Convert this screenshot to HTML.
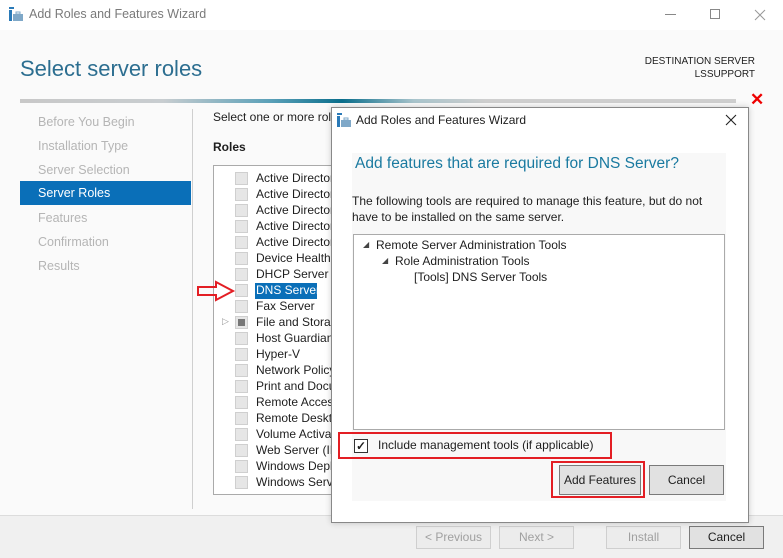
<!DOCTYPE html>
<html><head><style>
*{margin:0;padding:0;box-sizing:border-box}
body{width:783px;height:558px;overflow:hidden;position:relative;background:#fafafa;font-family:"Segoe UI","Liberation Sans",sans-serif;font-size:12px;color:#1e1e1e}
.a{position:absolute;white-space:nowrap}
.btn{position:absolute;height:23px;border:1px solid #adadad;background:#e1e1e1;text-align:center;line-height:20px;font-size:12px}
.dis{color:#a0a0a0;border-color:#cfcfcf;background:#ececec}
.cb{position:absolute;left:235px;width:13px;height:13px;background:#e6e6e6;border:1px solid #cfcfcf}
.ri{position:absolute;left:256px;font-size:12px}
.nav{position:absolute;left:38px;color:#b5b5b5;font-size:12.5px}
</style></head><body>
<div class="a" style="left:0;top:0;width:783px;height:30px;background:#fff"></div>
<svg class="a" style="left:8px;top:6px" width="16" height="16"><rect x="1" y="1" width="5" height="2" fill="#2a7ab8"/><rect x="1" y="4" width="3" height="11" fill="#2a7ab8"/><rect x="5" y="8" width="10" height="7" fill="#7fa8c8"/><rect x="8" y="6" width="4" height="2" fill="none" stroke="#7fa8c8"/></svg>
<div class="a" style="left:29px;top:7px;color:#7a7a7a;font-size:12.5px">Add Roles and Features Wizard</div>
<div class="a" style="left:665px;top:14px;width:11px;height:1px;background:#888"></div>
<div class="a" style="left:710px;top:9px;width:10px;height:10px;border:1px solid #888"></div>
<svg class="a" style="left:754px;top:9px" width="12" height="12"><path d="M1 1L11 11M11 1L1 11" stroke="#999" stroke-width="1"/></svg>
<div class="a" style="left:20px;top:56px;font-size:22px;color:#2c6e90;font-weight:300">Select server roles</div>
<div class="a" style="left:600px;top:55px;width:155px;text-align:right;font-size:10px;line-height:13px">DESTINATION SERVER<br>LSSUPPORT</div>
<div class="a" style="left:20px;top:99px;width:716px;height:4px;background:linear-gradient(90deg,#c8c8c8 0%,#c8cdd0 20%,#5aa0b8 35%,#0a6e8c 45%,#a8c4cc 55%,#cfcfcf 65%,#cfcfcf 100%)"></div>
<div class="a" style="left:750px;top:90px;color:#e00;font-size:17px;font-weight:bold">✕</div>
<div class="a" style="left:192px;top:109px;width:1px;height:400px;background:#cfcfcf"></div>
<div class="nav" style="top:115px">Before You Begin</div>
<div class="nav" style="top:139px">Installation Type</div>
<div class="nav" style="top:163px">Server Selection</div>
<div class="a" style="left:20px;top:181px;width:171px;height:24px;background:#0a6fb8"></div>
<div class="nav" style="top:186px;color:#fff">Server Roles</div>
<div class="nav" style="top:211px">Features</div>
<div class="nav" style="top:235px">Confirmation</div>
<div class="nav" style="top:259px">Results</div>
<div class="a" style="left:213px;top:110px">Select one or more rol</div>
<div class="a" style="left:213px;top:140px;font-weight:bold;font-size:12px">Roles</div>
<div class="a" style="left:213px;top:165px;width:130px;height:330px;background:#fff;border:1px solid #aaa"></div>
<div class="cb" style="top:172px"></div><div class="ri" style="top:171px">Active Director</div>
<div class="cb" style="top:188px"></div><div class="ri" style="top:187px">Active Director</div>
<div class="cb" style="top:204px"></div><div class="ri" style="top:203px">Active Director</div>
<div class="cb" style="top:220px"></div><div class="ri" style="top:219px">Active Director</div>
<div class="cb" style="top:236px"></div><div class="ri" style="top:235px">Active Director</div>
<div class="cb" style="top:252px"></div><div class="ri" style="top:251px">Device Health</div>
<div class="cb" style="top:268px"></div><div class="ri" style="top:267px">DHCP Server</div>
<div class="cb" style="top:284px"></div><div class="a" style="left:255px;top:283px;width:62px;height:16px;background:#0a6fb8"></div><div class="ri" style="top:283px;color:#fff">DNS Server</div>
<svg class="a" style="left:196px;top:280px" width="40" height="22"><path d="M2 7 H20 V2 L37 11 L20 20 V15 H2 Z" fill="none" stroke="#e31e24" stroke-width="2"/></svg>
<div class="cb" style="top:300px"></div><div class="ri" style="top:299px">Fax Server</div>
<div class="a" style="left:222px;top:316px;color:#999;font-size:9px">▷</div>
<div class="cb" style="top:316px"></div><div class="a" style="left:238px;top:319px;width:7px;height:7px;background:#777"></div><div class="ri" style="top:315px">File and Storag</div>
<div class="cb" style="top:332px"></div><div class="ri" style="top:331px">Host Guardian</div>
<div class="cb" style="top:348px"></div><div class="ri" style="top:347px">Hyper-V</div>
<div class="cb" style="top:364px"></div><div class="ri" style="top:363px">Network Policy</div>
<div class="cb" style="top:380px"></div><div class="ri" style="top:379px">Print and Docu</div>
<div class="cb" style="top:396px"></div><div class="ri" style="top:395px">Remote Access</div>
<div class="cb" style="top:412px"></div><div class="ri" style="top:411px">Remote Deskto</div>
<div class="cb" style="top:428px"></div><div class="ri" style="top:427px">Volume Activa</div>
<div class="cb" style="top:444px"></div><div class="ri" style="top:443px">Web Server (IIS</div>
<div class="cb" style="top:460px"></div><div class="ri" style="top:459px">Windows Depl</div>
<div class="cb" style="top:476px"></div><div class="ri" style="top:475px">Windows Serv</div>
<div class="a" style="left:735px;top:165px;font-size:12px;line-height:15px">r<br>P</div>
<div class="a" style="left:0;top:515px;width:783px;height:43px;background:#f0f0f0;border-top:1px solid #dcdcdc"></div>
<div class="btn dis" style="left:416px;top:526px;width:75px">&lt; Previous</div>
<div class="btn dis" style="left:499px;top:526px;width:75px">Next &gt;</div>
<div class="btn dis" style="left:606px;top:526px;width:75px">Install</div>
<div class="btn" style="left:689px;top:526px;width:75px;border-color:#7a7a7a">Cancel</div>
<!-- dialog -->
<div class="a" style="left:331px;top:107px;width:418px;height:416px;background:#fff;border:1px solid #888;box-shadow:0 0 6px rgba(0,0,0,.2)"></div>
<svg class="a" style="left:336px;top:112px" width="16" height="16"><rect x="1" y="1" width="5" height="2" fill="#2a7ab8"/><rect x="1" y="4" width="3" height="11" fill="#2a7ab8"/><rect x="5" y="8" width="10" height="7" fill="#7fa8c8"/><rect x="8" y="6" width="4" height="2" fill="none" stroke="#7fa8c8"/></svg>
<div class="a" style="left:356px;top:113px;font-size:12px">Add Roles and Features Wizard</div>
<svg class="a" style="left:725px;top:114px" width="12" height="12"><path d="M1 1L11 11M11 1L1 11" stroke="#222" stroke-width="1.1"/></svg>
<div class="a" style="left:352px;top:153px;width:374px;height:348px;background:#f8f8f8"></div>
<div class="a" style="left:355px;top:155px;font-size:15.5px;color:#1a7aa0">Add features that are required for DNS Server?</div>
<div class="a" style="left:352px;top:193px;font-size:12px;line-height:16px">The following tools are required to manage this feature, but do not<br>have to be installed on the same server.</div>
<div class="a" style="left:353px;top:234px;width:372px;height:196px;background:#fff;border:1px solid #aaa"></div>
<div class="a" style="left:363px;top:240px;font-size:8px;color:#444">◢</div>
<div class="a" style="left:376px;top:238px">Remote Server Administration Tools</div>
<div class="a" style="left:382px;top:256px;font-size:8px;color:#444">◢</div>
<div class="a" style="left:395px;top:254px">Role Administration Tools</div>
<div class="a" style="left:414px;top:270px">[Tools] DNS Server Tools</div>
<div class="a" style="left:338px;top:432px;width:274px;height:27px;border:2.5px solid #e31e24"></div>
<div class="a" style="left:354px;top:439px;width:14px;height:14px;border:1px solid #333;background:#fff;font-size:12px;line-height:12px;text-align:center;font-weight:bold">✓</div>
<div class="a" style="left:378px;top:438px">Include management tools (if applicable)</div>
<div class="a" style="left:551px;top:461px;width:94px;height:37px;border:2.5px solid #e31e24"></div>
<div class="btn" style="left:559px;top:465px;width:82px;height:30px;line-height:28px;border-color:#7a7a7a">Add Features</div>
<div class="btn" style="left:649px;top:465px;width:75px;height:30px;line-height:28px;border-color:#7a7a7a">Cancel</div>
</body></html>
